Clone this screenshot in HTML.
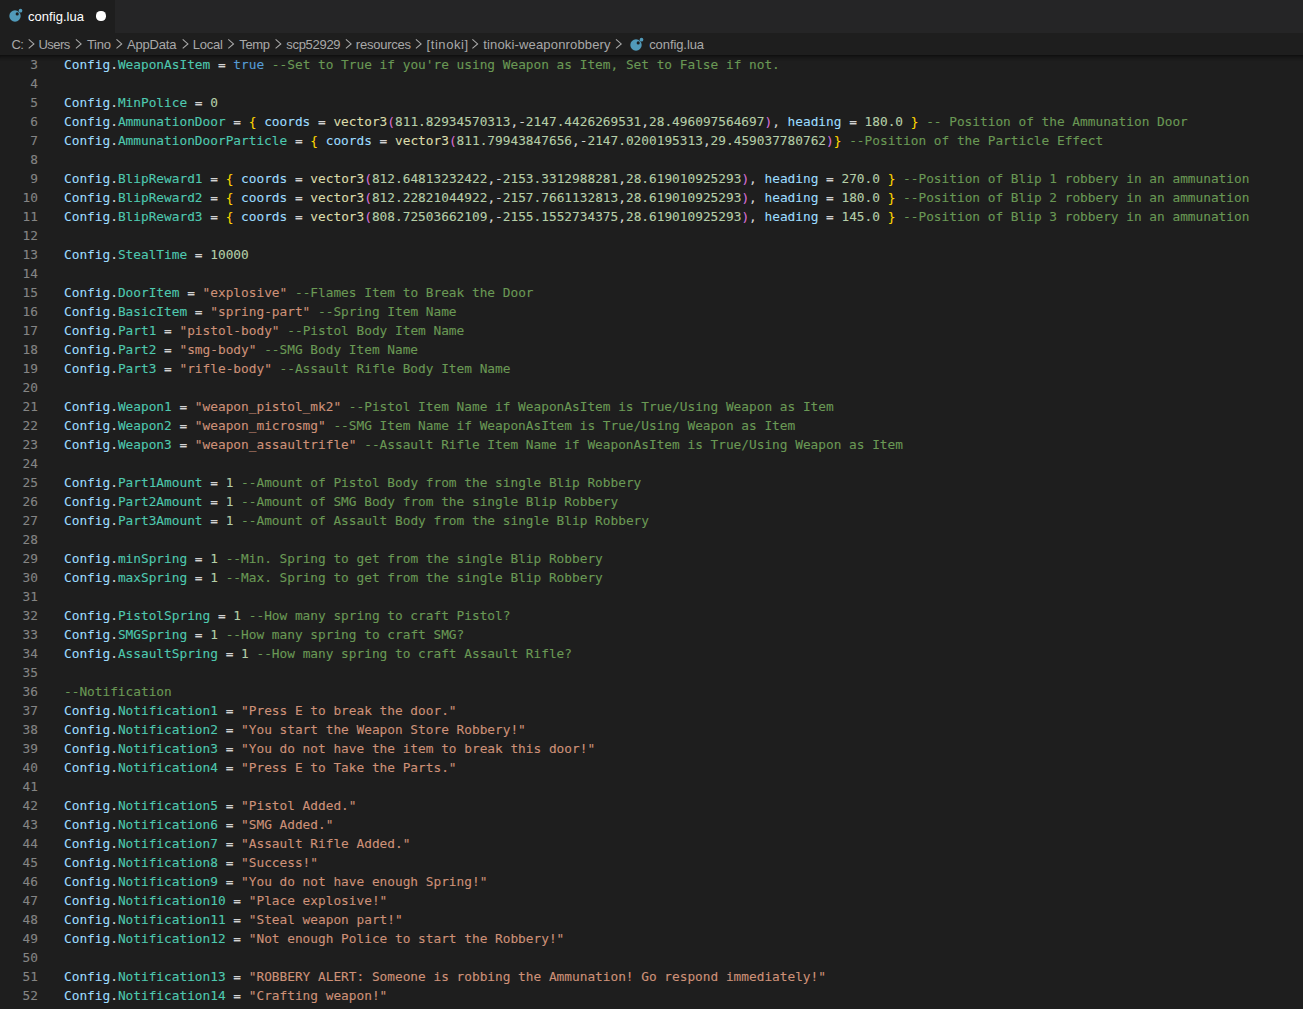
<!DOCTYPE html>
<html><head><meta charset="utf-8"><title>config.lua</title>
<style>
*{box-sizing:border-box;margin:0;padding:0}
html,body{width:1303px;height:1009px;overflow:hidden;background:#1e1e1e}
body{position:relative;font-family:"Liberation Sans",sans-serif;font-size:13px;color:#ccc}
.tabs{position:absolute;left:0;top:0;width:1303px;height:33px;background:#252526}
.tab{position:absolute;left:0;top:0;width:115px;height:33px;background:#1e1e1e;color:#fff}
.tab .lbl{position:absolute;left:28.01px;letter-spacing:0.04px;top:0;line-height:33px;font-size:13px;white-space:nowrap}
.tab .dot{position:absolute;left:96.4px;top:11.4px;width:9.2px;height:9.2px;border-radius:50%;background:#fff}
.ico{position:absolute;width:14px;height:14px}
.bc{position:absolute;left:0;top:33px;width:1303px;height:22px;background:#1e1e1e;color:#a9a9a9;font-size:13px;line-height:22px;white-space:nowrap}
.bc span{position:absolute;top:1px}
.shadow{position:absolute;left:0;top:55px;width:1303px;height:6px;box-shadow:#000 0 6px 6px -6px inset;z-index:2}
.ed{position:absolute;left:0;top:55px;width:1303px;height:954px;overflow:hidden;font-family:"DejaVu Sans Mono","Liberation Mono",monospace;font-size:12.8px;letter-spacing:-0.008px;line-height:19px;color:#d4d4d4}
.ln{position:relative;height:19px}
.no{position:absolute;left:0;top:0;width:38px;text-align:right;color:#858585;-webkit-text-stroke:0.1px}
.cd{position:absolute;left:64px;top:0;white-space:pre;-webkit-text-stroke:0.1px}
.c{color:#6a9955}.s{color:#ce9178}.p{color:#4ec9b0}.k{color:#569cd6}.f{color:#dcdcaa}.n{color:#b5cea8}.v{color:#9cdcfe}.b{color:#ffd700}.r{color:#da70d6}
</style></head><body>
<div class="tabs"><div class="tab">
<svg style="position:absolute;left:7.10px;top:5.60px" width="18" height="18" viewBox="-8 -10 18 18"><circle cx="0" cy="0" r="5.68" fill="#519aba"/><circle cx="2.2" cy="-2.1" r="1.55" fill="#1e1e1e"/><circle cx="5.5" cy="-5.3" r="1.85" fill="#519aba"/></svg>
<span class="lbl">config.lua</span><span class="dot"></span></div></div>
<div class="bc">
<span style="left:11.56px;letter-spacing:-0.796px">C:</span>
<span style="left:38.54px;letter-spacing:-0.565px">Users</span>
<span style="left:86.95px;letter-spacing:-0.285px">Tino</span>
<span style="left:127.08px;letter-spacing:-0.197px">AppData</span>
<span style="left:192.86px;letter-spacing:-0.291px">Local</span>
<span style="left:239.3px;letter-spacing:-0.394px">Temp</span>
<span style="left:286.22px;letter-spacing:-0.287px">scp52929</span>
<span style="left:355.85px;letter-spacing:-0.243px">resources</span>
<span style="left:426.56px;letter-spacing:0.562px">[tinoki]</span>
<span style="left:483.22px;letter-spacing:0.162px">tinoki-weaponrobbery</span>
<span style="left:649.21px;letter-spacing:-0.088px">config.lua</span>
<svg style="position:absolute;left:0.3px;top:-0.4px" width="700" height="22" viewBox="0 0 700 22" fill="none" stroke="#a9a9a9" stroke-width="1.1"><polyline points="28.7,6.4 33.9,10.9 28.7,15.4"/><polyline points="75.9,6.4 81.1,10.9 75.9,15.4"/><polyline points="116.5,6.4 121.7,10.9 116.5,15.4"/><polyline points="182.7,6.4 187.9,10.9 182.7,15.4"/><polyline points="228.3,6.4 233.5,10.9 228.3,15.4"/><polyline points="275.6,6.4 280.8,10.9 275.6,15.4"/><polyline points="345.9,6.4 351.1,10.9 345.9,15.4"/><polyline points="415.9,6.4 421.1,10.9 415.9,15.4"/><polyline points="472.4,6.4 477.6,10.9 472.4,15.4"/><polyline points="616.0,6.4 621.2,10.9 616.0,15.4"/></svg>
<svg style="position:absolute;left:628.00px;top:1.60px" width="18" height="18" viewBox="-8 -10 18 18"><circle cx="0" cy="0" r="5.68" fill="#519aba"/><circle cx="2.2" cy="-2.1" r="1.55" fill="#1e1e1e"/><circle cx="5.5" cy="-5.3" r="1.85" fill="#519aba"/></svg>
</div>
<div class="shadow"></div>
<div class="ed">
<div class="ln"><span class="no">3</span><span class="cd"><span class="v">Config</span>.<span class="p">WeaponAsItem</span> = <span class="k">true</span> <span class="c">--Set to True if you're using Weapon as Item, Set to False if not.</span></span></div>
<div class="ln"><span class="no">4</span><span class="cd"></span></div>
<div class="ln"><span class="no">5</span><span class="cd"><span class="v">Config</span>.<span class="p">MinPolice</span> = <span class="n">0</span></span></div>
<div class="ln"><span class="no">6</span><span class="cd"><span class="v">Config</span>.<span class="p">AmmunationDoor</span> = <span class="b">{</span> <span class="v">coords</span> = <span class="f">vector3</span><span class="r">(</span><span class="n">811.82934570313</span>,-<span class="n">2147.4426269531</span>,<span class="n">28.496097564697</span><span class="r">)</span>, <span class="v">heading</span> = <span class="n">180.0</span> <span class="b">}</span> <span class="c">-- Position of the Ammunation Door</span></span></div>
<div class="ln"><span class="no">7</span><span class="cd"><span class="v">Config</span>.<span class="p">AmmunationDoorParticle</span> = <span class="b">{</span> <span class="v">coords</span> = <span class="f">vector3</span><span class="r">(</span><span class="n">811.79943847656</span>,-<span class="n">2147.0200195313</span>,<span class="n">29.459037780762</span><span class="r">)</span><span class="b">}</span> <span class="c">--Position of the Particle Effect</span></span></div>
<div class="ln"><span class="no">8</span><span class="cd"></span></div>
<div class="ln"><span class="no">9</span><span class="cd"><span class="v">Config</span>.<span class="p">BlipReward1</span> = <span class="b">{</span> <span class="v">coords</span> = <span class="f">vector3</span><span class="r">(</span><span class="n">812.64813232422</span>,-<span class="n">2153.3312988281</span>,<span class="n">28.619010925293</span><span class="r">)</span>, <span class="v">heading</span> = <span class="n">270.0</span> <span class="b">}</span> <span class="c">--Position of Blip 1 robbery in an ammunation</span></span></div>
<div class="ln"><span class="no">10</span><span class="cd"><span class="v">Config</span>.<span class="p">BlipReward2</span> = <span class="b">{</span> <span class="v">coords</span> = <span class="f">vector3</span><span class="r">(</span><span class="n">812.22821044922</span>,-<span class="n">2157.7661132813</span>,<span class="n">28.619010925293</span><span class="r">)</span>, <span class="v">heading</span> = <span class="n">180.0</span> <span class="b">}</span> <span class="c">--Position of Blip 2 robbery in an ammunation</span></span></div>
<div class="ln"><span class="no">11</span><span class="cd"><span class="v">Config</span>.<span class="p">BlipReward3</span> = <span class="b">{</span> <span class="v">coords</span> = <span class="f">vector3</span><span class="r">(</span><span class="n">808.72503662109</span>,-<span class="n">2155.1552734375</span>,<span class="n">28.619010925293</span><span class="r">)</span>, <span class="v">heading</span> = <span class="n">145.0</span> <span class="b">}</span> <span class="c">--Position of Blip 3 robbery in an ammunation</span></span></div>
<div class="ln"><span class="no">12</span><span class="cd"></span></div>
<div class="ln"><span class="no">13</span><span class="cd"><span class="v">Config</span>.<span class="p">StealTime</span> = <span class="n">10000</span></span></div>
<div class="ln"><span class="no">14</span><span class="cd"></span></div>
<div class="ln"><span class="no">15</span><span class="cd"><span class="v">Config</span>.<span class="p">DoorItem</span> = <span class="s">"explosive"</span> <span class="c">--Flames Item to Break the Door</span></span></div>
<div class="ln"><span class="no">16</span><span class="cd"><span class="v">Config</span>.<span class="p">BasicItem</span> = <span class="s">"spring-part"</span> <span class="c">--Spring Item Name</span></span></div>
<div class="ln"><span class="no">17</span><span class="cd"><span class="v">Config</span>.<span class="p">Part1</span> = <span class="s">"pistol-body"</span> <span class="c">--Pistol Body Item Name</span></span></div>
<div class="ln"><span class="no">18</span><span class="cd"><span class="v">Config</span>.<span class="p">Part2</span> = <span class="s">"smg-body"</span> <span class="c">--SMG Body Item Name</span></span></div>
<div class="ln"><span class="no">19</span><span class="cd"><span class="v">Config</span>.<span class="p">Part3</span> = <span class="s">"rifle-body"</span> <span class="c">--Assault Rifle Body Item Name</span></span></div>
<div class="ln"><span class="no">20</span><span class="cd"></span></div>
<div class="ln"><span class="no">21</span><span class="cd"><span class="v">Config</span>.<span class="p">Weapon1</span> = <span class="s">"weapon_pistol_mk2"</span> <span class="c">--Pistol Item Name if WeaponAsItem is True/Using Weapon as Item</span></span></div>
<div class="ln"><span class="no">22</span><span class="cd"><span class="v">Config</span>.<span class="p">Weapon2</span> = <span class="s">"weapon_microsmg"</span> <span class="c">--SMG Item Name if WeaponAsItem is True/Using Weapon as Item</span></span></div>
<div class="ln"><span class="no">23</span><span class="cd"><span class="v">Config</span>.<span class="p">Weapon3</span> = <span class="s">"weapon_assaultrifle"</span> <span class="c">--Assault Rifle Item Name if WeaponAsItem is True/Using Weapon as Item</span></span></div>
<div class="ln"><span class="no">24</span><span class="cd"></span></div>
<div class="ln"><span class="no">25</span><span class="cd"><span class="v">Config</span>.<span class="p">Part1Amount</span> = <span class="n">1</span> <span class="c">--Amount of Pistol Body from the single Blip Robbery</span></span></div>
<div class="ln"><span class="no">26</span><span class="cd"><span class="v">Config</span>.<span class="p">Part2Amount</span> = <span class="n">1</span> <span class="c">--Amount of SMG Body from the single Blip Robbery</span></span></div>
<div class="ln"><span class="no">27</span><span class="cd"><span class="v">Config</span>.<span class="p">Part3Amount</span> = <span class="n">1</span> <span class="c">--Amount of Assault Body from the single Blip Robbery</span></span></div>
<div class="ln"><span class="no">28</span><span class="cd"></span></div>
<div class="ln"><span class="no">29</span><span class="cd"><span class="v">Config</span>.<span class="p">minSpring</span> = <span class="n">1</span> <span class="c">--Min. Spring to get from the single Blip Robbery</span></span></div>
<div class="ln"><span class="no">30</span><span class="cd"><span class="v">Config</span>.<span class="p">maxSpring</span> = <span class="n">1</span> <span class="c">--Max. Spring to get from the single Blip Robbery</span></span></div>
<div class="ln"><span class="no">31</span><span class="cd"></span></div>
<div class="ln"><span class="no">32</span><span class="cd"><span class="v">Config</span>.<span class="p">PistolSpring</span> = <span class="n">1</span> <span class="c">--How many spring to craft Pistol?</span></span></div>
<div class="ln"><span class="no">33</span><span class="cd"><span class="v">Config</span>.<span class="p">SMGSpring</span> = <span class="n">1</span> <span class="c">--How many spring to craft SMG?</span></span></div>
<div class="ln"><span class="no">34</span><span class="cd"><span class="v">Config</span>.<span class="p">AssaultSpring</span> = <span class="n">1</span> <span class="c">--How many spring to craft Assault Rifle?</span></span></div>
<div class="ln"><span class="no">35</span><span class="cd"></span></div>
<div class="ln"><span class="no">36</span><span class="cd"><span class="c">--Notification</span></span></div>
<div class="ln"><span class="no">37</span><span class="cd"><span class="v">Config</span>.<span class="p">Notification1</span> = <span class="s">"Press E to break the door."</span></span></div>
<div class="ln"><span class="no">38</span><span class="cd"><span class="v">Config</span>.<span class="p">Notification2</span> = <span class="s">"You start the Weapon Store Robbery!"</span></span></div>
<div class="ln"><span class="no">39</span><span class="cd"><span class="v">Config</span>.<span class="p">Notification3</span> = <span class="s">"You do not have the item to break this door!"</span></span></div>
<div class="ln"><span class="no">40</span><span class="cd"><span class="v">Config</span>.<span class="p">Notification4</span> = <span class="s">"Press E to Take the Parts."</span></span></div>
<div class="ln"><span class="no">41</span><span class="cd"></span></div>
<div class="ln"><span class="no">42</span><span class="cd"><span class="v">Config</span>.<span class="p">Notification5</span> = <span class="s">"Pistol Added."</span></span></div>
<div class="ln"><span class="no">43</span><span class="cd"><span class="v">Config</span>.<span class="p">Notification6</span> = <span class="s">"SMG Added."</span></span></div>
<div class="ln"><span class="no">44</span><span class="cd"><span class="v">Config</span>.<span class="p">Notification7</span> = <span class="s">"Assault Rifle Added."</span></span></div>
<div class="ln"><span class="no">45</span><span class="cd"><span class="v">Config</span>.<span class="p">Notification8</span> = <span class="s">"Success!"</span></span></div>
<div class="ln"><span class="no">46</span><span class="cd"><span class="v">Config</span>.<span class="p">Notification9</span> = <span class="s">"You do not have enough Spring!"</span></span></div>
<div class="ln"><span class="no">47</span><span class="cd"><span class="v">Config</span>.<span class="p">Notification10</span> = <span class="s">"Place explosive!"</span></span></div>
<div class="ln"><span class="no">48</span><span class="cd"><span class="v">Config</span>.<span class="p">Notification11</span> = <span class="s">"Steal weapon part!"</span></span></div>
<div class="ln"><span class="no">49</span><span class="cd"><span class="v">Config</span>.<span class="p">Notification12</span> = <span class="s">"Not enough Police to start the Robbery!"</span></span></div>
<div class="ln"><span class="no">50</span><span class="cd"></span></div>
<div class="ln"><span class="no">51</span><span class="cd"><span class="v">Config</span>.<span class="p">Notification13</span> = <span class="s">"ROBBERY ALERT: Someone is robbing the Ammunation! Go respond immediately!"</span></span></div>
<div class="ln"><span class="no">52</span><span class="cd"><span class="v">Config</span>.<span class="p">Notification14</span> = <span class="s">"Crafting weapon!"</span></span></div>
</div>
</body></html>
